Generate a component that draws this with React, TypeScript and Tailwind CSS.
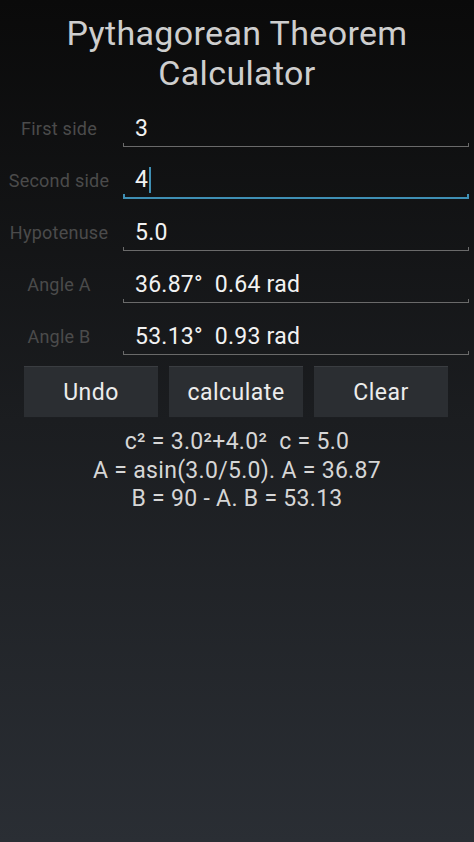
const rows = [
  { label: "First side", value: "3" },
  { label: "Second side", value: "4", focused: true },
  { label: "Hypotenuse", value: "5.0" },
  { label: "Angle A", value: "36.87°  0.64 rad" },
  { label: "Angle B", value: "53.13°  0.93 rad" },
];

function Field({ value, focused }: { value: string; focused?: boolean }) {
  return (
    <div className="flex h-[52px] flex-col justify-end pb-[3px] pl-[5px] pr-[5px]">
      <div className="flex items-center whitespace-pre pl-[12px] pb-[1px] text-[23px] leading-[26px] tracking-[0.25px] text-[#f2f2f2]">
        {value}
        {focused && <span className="ml-[1px] inline-block h-[26px] w-[2px] bg-[#3f8fb4]" />}
      </div>
      {focused ? (
        <div className="h-[5px] border-x-2 border-b-2 border-[#3f8fb4]" />
      ) : (
        <div className="h-[4px] border-x border-b border-[#6a6a6a]" />
      )}
    </div>
  );
}

export default function App() {
  return (
    <div
      className="flex h-[842px] w-full flex-col bg-gradient-to-b from-[#0a0a0a] via-[#1b1d20] to-[#2a2e34]"
      style={{ fontFamily: "Roboto, 'Noto Sans', sans-serif" }}
    >
      <h1 className="pt-[13px] text-center text-[34px] font-normal leading-[40px] tracking-[0.35px] text-[#cecece]">
        Pythagorean Theorem
        <br />
        Calculator
      </h1>

      <div className="mt-[5px] grid grid-cols-[118px_1fr]">
        {rows.map((r) => (
          <div key={r.label} className="contents">
            <div className="flex h-[52px] items-end justify-center pb-[8px] text-[18px] leading-[26px] tracking-[0.25px] text-[#4b4b4b]">
              {r.label}
            </div>
            <Field value={r.value} focused={r.focused} />
          </div>
        ))}
      </div>

      <div className="mt-[8px] grid grid-cols-3 gap-[11px] pl-[24px] pr-[26px]">
        {["Undo", "calculate", "Clear"].map((b) => (
          <button
            key={b}
            className="h-[52px] border-t border-t-[#3a3d41] border-b border-b-[#1c1e21] bg-[#2b2e32] pt-[3px] text-[23px] tracking-[0.5px] text-[#ececec]"
          >
            {b}
          </button>
        ))}
      </div>

      <div className="mt-[10px] text-center text-[23px] leading-[28.5px] tracking-[0.3px] text-[#d6d6d6] whitespace-pre">
        <div>c² = 3.0²+4.0²  c = 5.0</div>
        <div>A = asin(3.0/5.0). A = 36.87</div>
        <div>B = 90 - A. B = 53.13</div>
      </div>
    </div>
  );
}
